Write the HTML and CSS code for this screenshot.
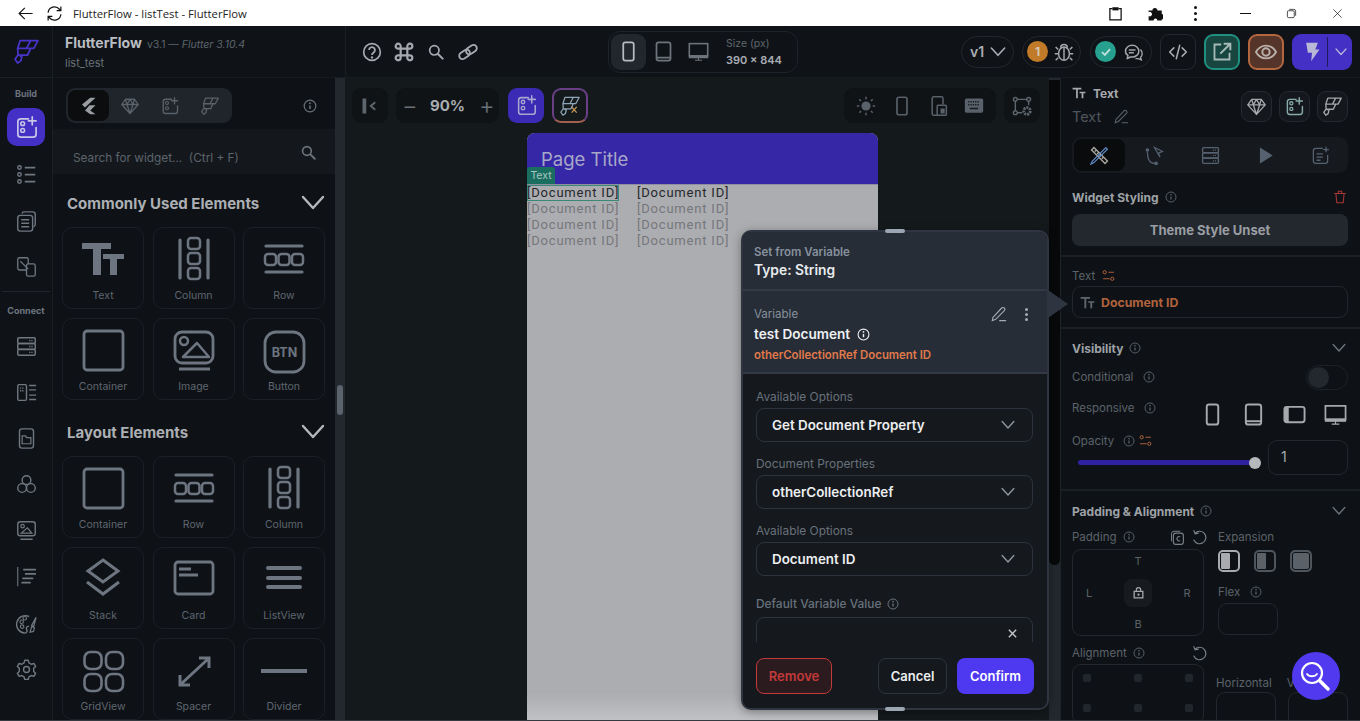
FILE: index.html
```html
<!DOCTYPE html>
<html lang="en">
<head>
<meta charset="utf-8">
<title>FlutterFlow - listTest - FlutterFlow</title>
<link rel="stylesheet" href="styles.css">
</head>
<body>
<svg class="sprite" aria-hidden="true">
  <symbol id="plus-w" viewBox="0 0 24 24"><path d="M14 3H6a3 3 0 0 0-3 3v13a3 3 0 0 0 3 3h13a3 3 0 0 0 3-3v-7M18 1v8M14 5h8" fill="none" stroke="currentColor" stroke-width="1.8" stroke-linecap="round"/><circle cx="8" cy="8" r="2" fill="none" stroke="currentColor" stroke-width="1.6"/><circle cx="8" cy="15" r="2" fill="none" stroke="currentColor" stroke-width="1.6"/></symbol>
  <symbol id="logo" viewBox="0 0 24 24"><path d="M6 1.500h17l-4 7.500H3.500zM16 1.500L12 9M3.500 9H16l-3 6.500H4zM4 15l3.500 2-1 4-3 2-2.500-3.500z" fill="none" stroke="currentColor" stroke-width="1.7" stroke-linejoin="round"/></symbol>
  <symbol id="gem" viewBox="0 0 24 24"><path d="M6 3h12l5 7-11 12L1 10zM1 10h22M8 10l4 12 4-12M6 3l2 7 4-7 4 7 2-7" fill="none" stroke="currentColor" stroke-width="1.7" stroke-linejoin="round"/></symbol>
  <symbol id="flutter" viewBox="0 0 24 24"><path d="M15 1h7L8 14l-4-4zM14 11h8l-7 7 7 5h-7l-7-5z" fill="currentColor"/></symbol>
  <symbol id="info" viewBox="0 0 24 24"><circle cx="12" cy="12" r="10" fill="none" stroke="currentColor" stroke-width="2"/><path d="M12 11v6" stroke="currentColor" stroke-width="2.6"/><circle cx="12" cy="7.3" r="1.6" fill="currentColor"/></symbol>
  <symbol id="search" viewBox="0 0 24 24"><circle cx="9.5" cy="9.5" r="7" fill="none" stroke="currentColor" stroke-width="2.6"/><path d="M15 15l7 7" stroke="currentColor" stroke-width="3" stroke-linecap="round"/></symbol>
  <symbol id="chev" viewBox="0 0 24 24"><path d="M2 6l10 11L22 6" fill="none" stroke="currentColor" stroke-width="2.4" stroke-linecap="round" stroke-linejoin="round"/></symbol>
  <symbol id="list" viewBox="0 0 24 24"><g fill="none" stroke="currentColor" stroke-width="1.6"><circle cx="4" cy="4" r="2"/><circle cx="4" cy="12" r="2"/><circle cx="4" cy="20" r="2"/></g><path d="M10 4h12M10 12h12M10 20h12" stroke="currentColor" stroke-width="2"/></symbol>
  <symbol id="cards" viewBox="0 0 24 24"><path d="M7 3a2 2 0 0 1 2-2h10a3 3 0 0 1 3 3v11a3 3 0 0 1-2 3" fill="none" stroke="currentColor" stroke-width="1.6"/><rect x="2" y="5" width="17" height="18" rx="3" fill="none" stroke="currentColor" stroke-width="1.6"/><path d="M6 10h9M6 14h9M6 18h9" stroke="currentColor" stroke-width="1.6"/></symbol>
  <symbol id="translate" viewBox="0 0 24 24"><rect x="2" y="2" width="12" height="14" rx="2" fill="none" stroke="currentColor" stroke-width="1.5"/><rect x="12" y="9" width="10" height="14" rx="2" fill="#0f1317" stroke="currentColor" stroke-width="1.5"/><path d="M5 6l9 9" stroke="currentColor" stroke-width="1.4"/></symbol>
  <symbol id="db" viewBox="0 0 24 24"><g fill="none" stroke="currentColor" stroke-width="1.7"><rect x="2" y="2" width="20" height="6.5" rx="1.4"/><rect x="2" y="8.7" width="20" height="6.5" rx="1.4"/><rect x="2" y="15.4" width="20" height="6.5" rx="1.4"/></g><path d="M15 5.2h4M15 12h4M15 18.7h4" stroke="currentColor" stroke-width="1.5" stroke-dasharray="1.5 1"/></symbol>
  <symbol id="api" viewBox="0 0 24 24"><rect x="2" y="3" width="10" height="18" rx="1.5" fill="none" stroke="currentColor" stroke-width="1.6"/><path d="M4.5 7h5M4.5 10h5" stroke="currentColor" stroke-width="1.6" stroke-dasharray="1.5 1"/><path d="M15 4h8M15 9h8M15 15h8M15 20h8" stroke="currentColor" stroke-width="1.6"/></symbol>
  <symbol id="folder" viewBox="0 0 24 24"><rect x="4" y="1" width="16" height="22" rx="3" fill="none" stroke="currentColor" stroke-width="1.6"/><path d="M7 9h4l1 2h5v7H7z" fill="none" stroke="currentColor" stroke-width="1.4"/></symbol>
  <symbol id="tri" viewBox="0 0 24 24"><g fill="none" stroke="currentColor" stroke-width="1.6"><circle cx="12" cy="7" r="5"/><circle cx="7" cy="16" r="5"/><circle cx="17" cy="16" r="5"/></g></symbol>
  <symbol id="image" viewBox="0 0 24 24"><rect x="2" y="2" width="20" height="16" rx="3" fill="none" stroke="currentColor" stroke-width="1.6"/><circle cx="7.5" cy="7" r="2" fill="none" stroke="currentColor" stroke-width="1.4"/><path d="M6 15l7-6 5 6zM5 22h14" fill="none" stroke="currentColor" stroke-width="1.5"/></symbol>
  <symbol id="align" viewBox="0 0 24 24"><path d="M2 1v22" stroke="currentColor" stroke-width="1.2"/><path d="M9 4h13M11 9h11M8 14h11M7 19h9" stroke="currentColor" stroke-width="2" stroke-linecap="round"/></symbol>
  <symbol id="palette" viewBox="0 0 24 24"><path d="M15 4a10 10 0 1 0-5 19c3 0 3-3 2-5s2-3 3-3" fill="none" stroke="currentColor" stroke-width="1.6"/><circle cx="6.5" cy="10" r="2" fill="none" stroke="currentColor" stroke-width="1.3"/><circle cx="10" cy="6" r="2" fill="none" stroke="currentColor" stroke-width="1.3"/><circle cx="7" cy="15.5" r="2" fill="none" stroke="currentColor" stroke-width="1.3"/><path d="M23 5l-5 9 2 2zM18 15l-2 7 4-1 1-4z" fill="none" stroke="currentColor" stroke-width="1.4"/></symbol>
  <symbol id="gear" viewBox="0 0 24 24"><path d="M10 1.5h4l.8 3 2.6 1.5 3-.9 2 3.4-2.2 2.2v3.500l2.2 2.2-2 3.400-3-.9-2.6 1.500-.8 3h-4l-.8-3L6.600 18.900l-3 .9-2-3.400 2.200-2.200v-3.500L1.600 8.500l2-3.400 3 .9L9.200 4.500z" fill="none" stroke="currentColor" stroke-width="1.6" stroke-linejoin="round"/><circle cx="12" cy="12" r="3.400" fill="none" stroke="currentColor" stroke-width="1.6"/></symbol>
  <symbol id="help" viewBox="0 0 24 24"><circle cx="12" cy="12" r="10" fill="none" stroke="currentColor" stroke-width="2"/><path d="M8.500 9.500a3.500 3.500 0 1 1 5.500 3c-1.300.9-2 1.500-2 3" fill="none" stroke="currentColor" stroke-width="2.200"/><circle cx="12" cy="18.500" r="1.400" fill="currentColor"/></symbol>
  <symbol id="cmd" viewBox="0 0 24 24"><path d="M8 8h8v8H8zM8 8H5a3 3 0 1 1 3-3zM16 8V5a3 3 0 1 1 3 3zM16 16h3a3 3 0 1 1-3 3zM8 16v3a3 3 0 1 1-3-3z" fill="none" stroke="currentColor" stroke-width="2.600"/></symbol>
  <symbol id="link" viewBox="0 0 24 24"><g fill="none" stroke="currentColor" stroke-width="2.200" transform="rotate(-35 12 12)"><rect x="0" y="8" width="14" height="8" rx="4"/><rect x="10" y="8" width="14" height="8" rx="4"/></g></symbol>
  <symbol id="phone" viewBox="0 0 24 24"><rect x="6" y="1.500" width="12" height="21" rx="2.500" fill="none" stroke="currentColor" stroke-width="2"/></symbol>
  <symbol id="tablet" viewBox="0 0 24 24"><rect x="4" y="1.500" width="16" height="21" rx="2.500" fill="none" stroke="currentColor" stroke-width="2"/><path d="M4 19h16" stroke="currentColor" stroke-width="2"/></symbol>
  <symbol id="desktop" viewBox="0 0 24 24"><rect x="1.500" y="3" width="21" height="14" fill="none" stroke="currentColor" stroke-width="1.800"/><path d="M1.500 17h21v2h-21zM8 22h8M12 19v3" fill="currentColor" stroke="currentColor" stroke-width="1.200"/></symbol>
  <symbol id="bug" viewBox="0 0 24 24"><ellipse cx="12" cy="14" rx="6.500" ry="8" fill="none" stroke="currentColor" stroke-width="1.800"/><path d="M8 7a4 4 0 0 1 8 0M12 6v16M5 9L2 6M19 9l3-3M5 14H1M19 14h4M5 19l-3 3M19 19l3 3" fill="none" stroke="currentColor" stroke-width="1.800"/></symbol>
  <symbol id="chat" viewBox="0 0 24 24"><path d="M3 11c0-4 3.500-7 8-7s8 3 8 7-3.500 7-8 7H9l-4 2 1-4c-2-1-3-3-3-5zM7 9.500h8M7 13h6" fill="none" stroke="currentColor" stroke-width="1.800" stroke-linejoin="round"/><path d="M21 9c1.500 1.500 2 3 2 5 0 2-1 3.500-2 4.500l1 3-4-1.500h-3" fill="none" stroke="currentColor" stroke-width="1.600"/></symbol>
  <symbol id="code" viewBox="0 0 24 24"><path d="M7 7l-5 5 5 5M17 7l5 5-5 5M14 4l-4 16" fill="none" stroke="currentColor" stroke-width="1.900" stroke-linecap="round" stroke-linejoin="round"/></symbol>
  <symbol id="open" viewBox="0 0 24 24"><path d="M11 3H3v18h18v-8" fill="none" stroke="currentColor" stroke-width="2.200"/><path d="M10 14L21 3M14 2h8v8" fill="none" stroke="currentColor" stroke-width="2.400"/></symbol>
  <symbol id="eye" viewBox="0 0 24 24"><path d="M1 12c3-5 7-7 11-7s8 2 11 7c-3 5-7 7-11 7s-8-2-11-7z" fill="none" stroke="currentColor" stroke-width="2"/><circle cx="12" cy="12" r="4" fill="none" stroke="currentColor" stroke-width="2.200"/></symbol>
  <symbol id="bolt" viewBox="0 0 24 24"><path d="M5 1h14l-3 8h5l-10 14 1-10H7z" fill="currentColor"/></symbol>
  <symbol id="sun" viewBox="0 0 24 24"><circle cx="12" cy="12" r="5.500" fill="currentColor"/><path d="M12 1v3M12 20v3M1 12h3M20 12h3M4 4l2 2M18 18l2 2M4 20l2-2M18 6l2-2" stroke="currentColor" stroke-width="1.800"/></symbol>
  <symbol id="keyboard" viewBox="0 0 24 24"><path d="M3 3h18a2 2 0 0 1 2 2v13a2 2 0 0 1-2 2H3a2 2 0 0 1-2-2V5a2 2 0 0 1 2-2z" fill="currentColor"/><path d="M5 7h14M5 10.500h14" stroke="#14181c" stroke-width="1.800" stroke-dasharray="1.500 1.300"/><path d="M7 15h10" stroke="#14181c" stroke-width="1.800"/></symbol>
  <symbol id="phone-k" viewBox="0 0 24 24"><path d="M12 23H7a2 2 0 0 1-2-2V3a2 2 0 0 1 2-2h9a2 2 0 0 1 2 2v7" fill="none" stroke="currentColor" stroke-width="1.800"/><rect x="11" y="11" width="11" height="12" rx="1" fill="none" stroke="currentColor" stroke-width="1.800"/><rect x="15" y="15" width="5" height="6" fill="currentColor"/></symbol>
  <symbol id="nodes" viewBox="0 0 24 24"><g fill="none" stroke="currentColor" stroke-width="1.700"><circle cx="4" cy="4" r="2.300"/><circle cx="20" cy="4" r="2.300"/><circle cx="4" cy="20" r="2.300"/><path d="M6 4h12M4 6v12M6 20h6M20 6v5"/></g><circle cx="18" cy="18" r="4" fill="none" stroke="currentColor" stroke-width="3.400" stroke-dasharray="2.500 1"/></symbol>
  <symbol id="collapse" viewBox="0 0 24 24"><rect x="2" y="2" width="5" height="20" fill="currentColor"/><path d="M19 7l-6 5 6 5" fill="none" stroke="currentColor" stroke-width="2.600"/></symbol>
  <symbol id="theme" viewBox="0 0 24 24"><path d="M6 1.500h17l-4 7.500H3.500zM16 1.500L12 9M3.500 9H16l-3 6.500H4zM4 15l3.500 2-1 4-3 2-2.500-3.500z" fill="none" stroke="currentColor" stroke-width="1.500" stroke-linejoin="round"/><path d="M14 13l6 7M20 13l-6 7" stroke="#d9a35a" stroke-width="1.300"/></symbol>
  <symbol id="ruler" viewBox="0 0 24 24"><path d="M5 2l17 17-3 3L2 5zM8 5L6 7M11 8l-2 2M14 11l-2 2M17 14l-2 2" fill="none" stroke="currentColor" stroke-width="1.800"/><path d="M20 2l2 2L5 21l-4 2 2-4z" fill="none" stroke="#5d8cc7" stroke-width="1.500"/></symbol>
  <symbol id="flow" viewBox="0 0 24 24"><circle cx="3" cy="5" r="2.300" fill="currentColor"/><circle cx="14" cy="22" r="2.300" fill="currentColor"/><path d="M3 7c0 9 3 15 9 15" fill="none" stroke="currentColor" stroke-width="1.500"/><path d="M12 2l10 5-5 2 2 5z" fill="none" stroke="currentColor" stroke-width="1.500"/></symbol>
  <symbol id="play" viewBox="0 0 24 24"><path d="M5 2l16 10L5 22z" fill="currentColor"/></symbol>
  <symbol id="notes" viewBox="0 0 24 24"><path d="M15 3H6a3 3 0 0 0-3 3v13a3 3 0 0 0 3 3h12a3 3 0 0 0 3-3v-8M19 1v7M15.500 4.500h7M7 10h8M7 14h8M7 18h5" fill="none" stroke="currentColor" stroke-width="1.600"/></symbol>
  <symbol id="trash" viewBox="0 0 24 24"><path d="M2 6h20M9 6V2h6v4M5 6l1.500 16h11L19 6" fill="none" stroke="currentColor" stroke-width="1.800"/></symbol>
  <symbol id="pencil" viewBox="0 0 24 24"><path d="M3 17L16 3a2.500 2.500 0 0 1 4 4L7 20l-5 2zM13 22h9" fill="none" stroke="currentColor" stroke-width="1.700" stroke-linecap="round"/></symbol>
  <symbol id="tt" viewBox="0 0 24 24"><path d="M1 3h15v3h-6v15H7V6H1zM13 10h10v2.500h-3.500V21h-3v-8.500H13z" fill="currentColor"/></symbol>
  <symbol id="vars" viewBox="0 0 24 24"><g fill="none" stroke="currentColor" stroke-width="1.800"><circle cx="5" cy="6" r="3"/><circle cx="19" cy="18" r="3"/><path d="M12 6h10M2 18h12"/></g></symbol>
  <symbol id="copy" viewBox="0 0 24 24"><path d="M4 18V6a4 4 0 0 1 4-4h10" fill="none" stroke="currentColor" stroke-width="1.600"/><rect x="7" y="5" width="16" height="18" rx="4" fill="none" stroke="currentColor" stroke-width="1.800"/><path d="M18 11a3.500 3.500 0 1 0 0 6" fill="none" stroke="currentColor" stroke-width="1.800"/></symbol>
  <symbol id="undo" viewBox="0 0 24 24"><path d="M5 5a10 10 0 1 1-2 11M3 1l2 5 5-1" fill="none" stroke="currentColor" stroke-width="1.900" stroke-linecap="round"/></symbol>
  <symbol id="lock" viewBox="0 0 24 24"><path d="M8 10V7a4 4 0 0 1 8 0v3" fill="none" stroke="currentColor" stroke-width="2.200"/><path d="M4 10h16v12H4z" fill="none" stroke="currentColor" stroke-width="2.400"/><circle cx="12" cy="16" r="2" fill="currentColor"/></symbol>
  <symbol id="clipboard" viewBox="0 0 24 24"><path d="M7 4H3v18h18V4h-4" fill="none" stroke="currentColor" stroke-width="2"/><path d="M7 2h10v5H7z" fill="currentColor"/></symbol>
  <symbol id="puzzle" viewBox="0 0 24 24"><path d="M1 7h6a4 4 0 1 1 8 0h7v6a4 4 0 1 1 0 8v2h-7a3 3 0 1 0-6 0H1v-7a3.500 3.500 0 1 0 0-6z" fill="currentColor"/></symbol>
  <symbol id="restore" viewBox="0 0 24 24"><rect x="3" y="6" width="15" height="15" rx="2.500" fill="none" stroke="currentColor" stroke-width="1.600"/><path d="M7 3h10a4 4 0 0 1 4 4v10" fill="none" stroke="currentColor" stroke-width="1.600"/></symbol>
  <symbol id="t-text" viewBox="0 0 48 48"><path d="M3 8h29v6H22v26h-8V14H3zM24 19h21v5h-7v16h-7V24h-7z" fill="currentColor"/></symbol>
  <symbol id="t-column" viewBox="0 0 48 48"><g fill="none" stroke="currentColor" stroke-width="2.500"><rect x="18" y="3" width="12" height="11" rx="3"/><rect x="18" y="18" width="12" height="11" rx="3"/><rect x="18" y="33" width="12" height="11" rx="3"/></g><path d="M10 5v38M38 5v38" stroke="currentColor" stroke-width="3.200" stroke-linecap="round"/></symbol>
  <symbol id="t-row" viewBox="0 0 48 48"><g fill="none" stroke="currentColor" stroke-width="2.500"><rect x="5" y="19" width="11" height="11" rx="3"/><rect x="18.500" y="19" width="11" height="11" rx="3"/><rect x="32" y="19" width="11" height="11" rx="3"/></g><path d="M6 11h36M6 37h36" stroke="currentColor" stroke-width="3.200" stroke-linecap="round"/></symbol>
  <symbol id="t-container" viewBox="0 0 48 48"><rect x="5" y="5" width="39" height="39" rx="3" fill="none" stroke="currentColor" stroke-width="2.800"/></symbol>
  <symbol id="t-image" viewBox="0 0 48 48"><rect x="5" y="6" width="38" height="31" rx="7" fill="none" stroke="currentColor" stroke-width="2.800"/><circle cx="14" cy="15" r="4" fill="none" stroke="currentColor" stroke-width="2.500"/><path d="M13 31l14-14 12 14z" fill="none" stroke="currentColor" stroke-width="2.500" stroke-linejoin="round"/><path d="M9 43h31" stroke="currentColor" stroke-width="3"/></symbol>
  <symbol id="t-stack" viewBox="0 0 48 48"><path d="M24 5l15 11-15 11L9 16z" fill="none" stroke="currentColor" stroke-width="3"/><path d="M8 27l16 12 16-12" fill="none" stroke="currentColor" stroke-width="3"/></symbol>
  <symbol id="t-card" viewBox="0 0 48 48"><rect x="5" y="7" width="38" height="32" rx="3" fill="none" stroke="currentColor" stroke-width="2.800"/><path d="M9 14h12M9 20h19" stroke="currentColor" stroke-width="3"/></symbol>
  <symbol id="t-list" viewBox="0 0 48 48"><path d="M8 13h32M8 23h32M8 32h32" stroke="currentColor" stroke-width="4" stroke-linecap="round"/></symbol>
  <symbol id="t-grid" viewBox="0 0 48 48"><g fill="none" stroke="currentColor" stroke-width="2.600"><rect x="5.500" y="6" width="17" height="17" rx="6"/><rect x="27" y="6" width="17" height="17" rx="6"/><rect x="5.500" y="28" width="17" height="17" rx="6"/><rect x="27" y="28" width="17" height="17" rx="6"/></g></symbol>
  <symbol id="t-spacer" viewBox="0 0 48 48"><path d="M10 39l28-26M10 29v10h10M29 12h10v10" fill="none" stroke="currentColor" stroke-width="3"/></symbol>
  <symbol id="t-divider" viewBox="0 0 48 48"><path d="M1 25h46" stroke="currentColor" stroke-width="4"/></symbol>
</svg>

<header class="chrome">
  <svg class="c-ic c-back" viewBox="0 0 24 24"><path d="M22 12H3M11 4l-8 8 8 8" fill="none" stroke="currentColor" stroke-width="1.600"/></svg>
  <svg class="c-ic c-reload" viewBox="0 0 24 24"><path d="M3 11a9 9 0 0 1 16-5l2 2M21 13a9 9 0 0 1-16 5l-2-2M21 2v6h-6M3 22v-6h6" fill="none" stroke="currentColor" stroke-width="1.700"/></svg>
  <span class="c-title">FlutterFlow - listTest - FlutterFlow</span>
  <span class="c-fill"></span>
  <svg class="c-act"><use href="#clipboard"/></svg>
  <svg class="c-act"><use href="#puzzle"/></svg>
  <span class="c-dots"><i></i><i></i><i></i></span>
  <span class="c-win"><i class="c-min"></i></span>
  <svg class="c-win-ic"><use href="#restore"/></svg>
  <svg class="c-win-ic" viewBox="0 0 24 24"><path d="M3 3l18 18M21 3L3 21" stroke="currentColor" stroke-width="1.500"/></svg>
</header>

<div class="app">
  <nav class="rail">
    <div class="rail-logo"><svg><use href="#logo"/></svg></div>
    <span class="rail-label rail-build">Build</span>
    <button class="rail-active"><svg><use href="#plus-w"/></svg></button>
    <svg class="ri ri-list"><use href="#list"/></svg>
    <svg class="ri ri-cards"><use href="#cards"/></svg>
    <svg class="ri ri-tr"><use href="#translate"/></svg>
    <hr class="rail-sep">
    <span class="rail-label rail-connect">Connect</span>
    <svg class="ri ri-db"><use href="#db"/></svg>
    <svg class="ri ri-n"><use href="#api"/></svg>
    <svg class="ri ri-n"><use href="#folder"/></svg>
    <svg class="ri ri-n"><use href="#tri"/></svg>
    <svg class="ri ri-n"><use href="#image"/></svg>
    <svg class="ri ri-n"><use href="#align"/></svg>
    <svg class="ri ri-n"><use href="#palette"/></svg>
    <svg class="ri ri-n"><use href="#gear"/></svg>
  </nav>

  <div class="main">
    <div class="topbar">
      <div class="brand">
        <div class="brand-name"><b>FlutterFlow</b> <span>v3.1 — <em>Flutter 3.10.4</em></span></div>
        <div class="brand-proj">list_test</div>
      </div>
      <div class="tools">
        <svg class="tool"><use href="#help"/></svg>
        <svg class="tool"><use href="#cmd"/></svg>
        <svg class="tool tool-s"><use href="#search"/></svg>
        <svg class="tool"><use href="#link"/></svg>
      </div>
      <div class="devices">
        <span class="dev dev-on"><svg><use href="#phone"/></svg></span>
        <span class="dev"><svg><use href="#tablet"/></svg></span>
        <span class="dev"><svg><use href="#desktop"/></svg></span>
        <div class="size"><span>Size (px)</span><b>390 x 844</b></div>
      </div>
      <div class="pill pill-v"><b>v1</b><svg><use href="#chev"/></svg></div>
      <div class="pill pill-n"><span class="dot dot-o">1</span><svg><use href="#bug"/></svg></div>
      <div class="pill pill-c"><span class="dot dot-t"><svg viewBox="0 0 24 24"><path d="M5 12l5 5 9-10" fill="none" stroke="currentColor" stroke-width="3"/></svg></span><svg><use href="#chat"/></svg></div>
      <span class="sq sq-code"><svg><use href="#code"/></svg></span>
      <span class="sq sq-teal"><svg><use href="#open"/></svg></span>
      <span class="sq sq-brown"><svg><use href="#eye"/></svg></span>
      <span class="run"><svg class="run-b"><use href="#bolt"/></svg><i></i><svg class="run-c"><use href="#chev"/></svg></span>
    </div>

    <div class="work">
      <aside class="left">
        <div class="left-in">
          <div class="lib-row">
            <div class="lib-tabs">
              <span class="lib-on"><svg><use href="#flutter"/></svg></span>
              <span><svg><use href="#gem"/></svg></span>
              <span><svg><use href="#plus-w"/></svg></span>
              <span><svg><use href="#logo"/></svg></span>
            </div>
            <svg class="lib-info"><use href="#info"/></svg>
          </div>
          <div class="lib-search"><span>Search for widget...&nbsp; (Ctrl + F)</span><svg><use href="#search"/></svg></div>
          <div class="sec-h sec-first"><span>Commonly Used Elements</span><svg><use href="#chev"/></svg></div>
          <div class="tiles">
            <div class="tile"><svg><use href="#t-text"/></svg><span>Text</span></div>
            <div class="tile"><svg><use href="#t-column"/></svg><span>Column</span></div>
            <div class="tile"><svg><use href="#t-row"/></svg><span>Row</span></div>
            <div class="tile"><svg><use href="#t-container"/></svg><span>Container</span></div>
            <div class="tile"><svg><use href="#t-image"/></svg><span>Image</span></div>
            <div class="tile"><svg viewBox="0 0 48 48"><rect x="5" y="6" width="39" height="40" rx="11" fill="none" stroke="currentColor" stroke-width="2.800"/><text x="24.500" y="31" text-anchor="middle" class="btn-t">BTN</text></svg><span>Button</span></div>
          </div>
          <div class="sec-h"><span>Layout Elements</span><svg><use href="#chev"/></svg></div>
          <div class="tiles">
            <div class="tile"><svg><use href="#t-container"/></svg><span>Container</span></div>
            <div class="tile"><svg><use href="#t-row"/></svg><span>Row</span></div>
            <div class="tile"><svg><use href="#t-column"/></svg><span>Column</span></div>
            <div class="tile"><svg><use href="#t-stack"/></svg><span>Stack</span></div>
            <div class="tile"><svg><use href="#t-card"/></svg><span>Card</span></div>
            <div class="tile"><svg><use href="#t-list"/></svg><span>ListView</span></div>
            <div class="tile"><svg><use href="#t-grid"/></svg><span>GridView</span></div>
            <div class="tile"><svg><use href="#t-spacer"/></svg><span>Spacer</span></div>
            <div class="tile"><svg><use href="#t-divider"/></svg><span>Divider</span></div>
          </div>
        </div>
        <div class="left-track"><i></i></div>
      </aside>

      <section class="canvas">
        <div class="cv-bar">
          <span class="cv-btn"><svg><use href="#collapse"/></svg></span>
          <div class="zoom"><span>−</span><b>90%</b><span>+</span></div>
          <span class="cv-purple"><svg><use href="#plus-w"/></svg></span>
          <span class="cv-grad"><svg><use href="#theme"/></svg></span>
          <span class="cv-fill"></span>
          <div class="cv-group">
            <svg><use href="#sun"/></svg><svg><use href="#phone"/></svg><svg><use href="#phone-k"/></svg><svg><use href="#keyboard"/></svg>
          </div>
          <span class="cv-btn cv-nodes"><svg><use href="#nodes"/></svg></span>
        </div>
        <div class="phone">
          <div class="ph-head">
            <span class="ph-title">Page Title</span>
            <span class="ph-tag">Text</span>
          </div>
          <div class="ph-grid">
            <span class="doc doc-sel">[Document ID]</span><span class="doc doc-dark">[Document ID]</span>
            <span class="doc">[Document ID]</span><span class="doc">[Document ID]</span>
            <span class="doc">[Document ID]</span><span class="doc">[Document ID]</span>
            <span class="doc">[Document ID]</span><span class="doc">[Document ID]</span>
          </div>
        </div>
      </section>

      <div class="right-track"><i></i></div>

      <aside class="right">
        <div class="r-sec r-top">
          <div class="r-head">
            <div>
              <div class="r-title"><svg><use href="#tt"/></svg><b>Text</b></div>
              <div class="r-name"><span>Text</span><svg><use href="#pencil"/></svg></div>
            </div>
            <div class="r-btns">
              <span><svg><use href="#gem"/></svg></span>
              <span class="r-btn-c"><svg><use href="#plus-w"/></svg></span>
              <span><svg><use href="#logo"/></svg></span>
            </div>
          </div>
          <div class="r-tabs">
            <span class="r-tab-on"><svg><use href="#ruler"/></svg></span>
            <span><svg><use href="#flow"/></svg></span>
            <span><svg><use href="#db"/></svg></span>
            <span><svg><use href="#play"/></svg></span>
            <span><svg><use href="#notes"/></svg></span>
          </div>
          <div class="r-h r-style"><b>Widget Styling</b><svg class="i-i"><use href="#info"/></svg><svg class="i-trash"><use href="#trash"/></svg></div>
          <div class="theme-btn">Theme Style Unset</div>
        </div>

        <div class="r-sec r-text">
          <div class="r-lbl">Text <svg class="i-vars"><use href="#vars"/></svg></div>
          <div class="r-field"><svg><use href="#tt"/></svg><b>Document ID</b></div>
        </div>

        <div class="r-sec r-vis">
          <div class="r-h"><b>Visibility</b><svg class="i-i"><use href="#info"/></svg><svg class="i-ch"><use href="#chev"/></svg></div>
          <div class="r-row r-cond"><span class="r-lbl">Conditional <svg class="i-i"><use href="#info"/></svg></span><span class="toggle"><i></i></span></div>
          <div class="r-row r-resp"><span class="r-lbl">Responsive <svg class="i-i"><use href="#info"/></svg></span>
            <span class="resp"><svg><use href="#phone"/></svg><svg><use href="#tablet"/></svg><svg class="resp-l" viewBox="0 0 24 24"><rect x="1.500" y="4" width="21" height="16" rx="2.500" fill="none" stroke="currentColor" stroke-width="2"/><path d="M4 4v16" stroke="currentColor" stroke-width="4"/></svg><svg><use href="#desktop"/></svg></span></div>
          <div class="r-opacity">
            <div class="op-left">
              <span class="r-lbl">Opacity <svg class="i-i"><use href="#info"/></svg><svg class="i-vars"><use href="#vars"/></svg></span>
              <span class="slider"><i></i></span>
            </div>
            <div class="op-input">1</div>
          </div>
        </div>

        <div class="r-sec r-pad">
          <div class="r-h"><b>Padding &amp; Alignment</b><svg class="i-i"><use href="#info"/></svg><svg class="i-ch"><use href="#chev"/></svg></div>
          <div class="pad-grid">
            <div class="pad-l">
              <div class="r-lbl pad-lbl">Padding <svg class="i-i"><use href="#info"/></svg><span class="pad-sp"></span><svg class="i-act"><use href="#copy"/></svg><svg class="i-act"><use href="#undo"/></svg></div>
              <div class="pad-box">
                <span></span><span>T</span><span></span>
                <span>L</span><span class="lockb"><svg><use href="#lock"/></svg></span><span>R</span>
                <span></span><span>B</span><span></span>
              </div>
              <div class="r-lbl pad-lbl al-lbl">Alignment <svg class="i-i"><use href="#info"/></svg><span class="pad-sp"></span><svg class="i-act"><use href="#undo"/></svg></div>
              <div class="al-box"><i></i><i></i><i></i><i></i><i></i><i></i></div>
            </div>
            <div class="pad-r">
              <div class="r-lbl">Expansion</div>
              <div class="exp"><span class="exp-a"><i></i></span><span class="exp-b"><i></i></span><span class="exp-c"></span></div>
              <div class="r-lbl flex-lbl">Flex <svg class="i-i"><use href="#info"/></svg></div>
              <div class="flex-in"></div>
              <div class="r-lbl hz-lbl">Horizontal<span class="hz-v">Vertical</span></div>
              <div class="hz-ins"><span></span><span></span></div>
            </div>
          </div>
        </div>
      </aside>
    </div>
  </div>
</div>

<div class="popup">
  <i class="grip grip-t"></i>
  <div class="pop-head">
    <span>Set from Variable</span>
    <b>Type: String</b>
  </div>
  <div class="pop-var">
    <div class="pop-var-top"><span>Variable</span><svg class="pv-pen"><use href="#pencil"/></svg><span class="pv-dots"><i></i><i></i><i></i></span></div>
    <div class="pop-var-name"><b>test Document</b><svg><use href="#info"/></svg></div>
    <div class="pop-var-sub">otherCollectionRef Document ID</div>
  </div>
  <div class="pop-body">
    <div class="pf"><label>Available Options</label><div class="sel"><b>Get Document Property</b><svg><use href="#chev"/></svg></div></div>
    <div class="pf"><label>Document Properties</label><div class="sel"><b>otherCollectionRef</b><svg><use href="#chev"/></svg></div></div>
    <div class="pf"><label>Available Options</label><div class="sel"><b>Document ID</b><svg><use href="#chev"/></svg></div></div>
    <div class="pf pf-def"><label>Default Variable Value <svg><use href="#info"/></svg></label><div class="def-in"><svg viewBox="0 0 24 24"><path d="M4 4l16 16M20 4L4 20" stroke="currentColor" stroke-width="3"/></svg></div></div>
  </div>
  <div class="pop-foot">
    <span class="pb pb-rem">Remove</span>
    <span class="pb-fill"></span>
    <span class="pb pb-can">Cancel</span>
    <span class="pb pb-con">Confirm</span>
  </div>
  <i class="grip grip-b"></i>
  <i class="pop-arrow"></i>
</div>

<div class="fab"><svg viewBox="0 0 48 48"><circle cx="20" cy="21" r="10" fill="none" stroke="#fff" stroke-width="2.200"/><path d="M28 29l8 8" stroke="#fff" stroke-width="3.500" stroke-linecap="round"/><path d="M15 22c2 3 8 3 10 0" fill="none" stroke="#fff" stroke-width="1.800" stroke-linecap="round"/></svg></div>
</body>
</html>
```

FILE: styles.css
```css
* { box-sizing: border-box; }
html, body { margin: 0; height: 100%; overflow: hidden; }
body { font-family: Inter, "Noto Sans", sans-serif; background: #0f1317; color: #b8bcc1; position: relative; }
svg { display: block; }
b { font-weight: 700; }
i { display: block; font-style: normal; }
.sprite { width: 0; height: 0; position: absolute; }

/* browser chrome */
.chrome { height: 26px; background: #fff; color: #111; display: flex; align-items: center; }
.c-ic { width: 17px; height: 17px; }
.c-back { margin-left: 17px; }
.c-reload { margin-left: 12px; }
.c-title { margin-left: 10px; font: 11.3px "Open Sans", sans-serif; color: #222; }
.c-fill { flex: 1; }
.c-act { width: 15px; height: 15px; margin-right: 25px; }
.c-dots { display: flex; flex-direction: column; gap: 3px; margin: 0 43.5px 0 5.5px; }
.c-dots i { width: 3px; height: 3px; border-radius: 50%; background: #111; }
.c-win { width: 11px; margin-right: 35px; }
.c-min { height: 1px; background: #111; }
.c-win-ic { width: 11px; height: 11px; margin-right: 35px; }
.c-win-ic:last-child { margin-right: 17px; }

.app { height: 695px; display: flex; border-bottom: 1px solid #343a40; }

/* rail */
.rail { width: 53px; flex: none; background: #0f1317; border-right: 1px solid #1a1f24; display: flex; flex-direction: column; align-items: center; }
.rail-logo { height: 52px; width: 100%; border-bottom: 1px solid #1c2126; display: flex; align-items: center; justify-content: center; }
.rail-logo svg { width: 25px; height: 25px; color: #4a33c9; }
.rail-label { font-size: 9px; font-weight: 700; color: #6c7480; }
.rail-build { margin-top: 10px; line-height: 12px; }
.rail-connect { margin-top: 13px; line-height: 12px; color: #6f7781; }
.rail-active { margin-top: 8px; width: 38px; height: 38px; border: 0; padding: 0; border-radius: 10px; background: #4530c6; color: #c8c5e6; display: flex; align-items: center; justify-content: center; }
.rail-active svg { width: 23px; height: 23px; }
.ri { width: 21px; height: 21px; color: #6f7781; flex: none; }
.ri-list { margin-top: 18px; }
.ri-cards { margin-top: 26px; }
.ri-tr { margin-top: 24px; }
.rail-sep { width: 48px; border: 0; border-top: 1px solid #20252b; margin: 14px 0 0; }
.ri-db { margin-top: 19px; }
.ri-n { margin-top: 25.100px; }

.main { flex: 1; min-width: 0; display: flex; flex-direction: column; }

/* top bar */
.topbar { height: 52px; flex: none; display: flex; align-items: center; background: #0f1317; border-bottom: 1px solid #171b20; }
.brand { width: 293px; height: 100%; padding: 8px 12px; border-right: 1px solid #1a1f24; flex: none; }
.brand-name { font-size: 10.500px; color: #5d646c; line-height: 18px; white-space: nowrap; }
.brand-name b { font-size: 14px; color: #b9bdc2; margin-right: 2px; }
.brand-proj { font-size: 11px; color: #6a7178; line-height: 19px; }
.tools { display: flex; align-items: center; gap: 12px; padding-left: 16px; width: 262px; flex: none; }
.tool { width: 20px; height: 20px; color: #a6aab0; }
.tool-s { width: 16px; height: 16px; margin: 0 2px; }
.devices { width: 190px; height: 42px; border: 1px solid #1e2329; border-radius: 12px; display: flex; align-items: center; padding-left: 2px; flex: none; }
.dev { width: 35px; height: 36px; border-radius: 9px; display: flex; align-items: center; justify-content: center; color: #6d747c; }
.dev svg { width: 21px; height: 21px; }
.dev-on { background: #22272e; color: #b7bbc0; }
.size { margin-left: 10px; display: flex; flex-direction: column; gap: 3px; font-size: 10.500px; color: #5f666e; }
.size b { font-size: 11px; font-weight: 600; color: #a9adb3; }
.pill { height: 32px; border: 1px solid #22272d; border-radius: 16px; display: flex; align-items: center; flex: none; }
.pill-v { width: 53px; margin-left: 163px; padding-left: 8px; gap: 6px; color: #a9adb3; }
.pill-v b { font-size: 14px; font-weight: 600; }
.pill-v svg { width: 16px; height: 16px; }
.pill-n { width: 59px; margin-left: 8px; padding-left: 4px; gap: 6px; color: #a3a7ac; }
.pill-n > svg { width: 20px; height: 20px; }
.pill-c { width: 62px; margin-left: 9px; padding-left: 4px; gap: 7px; color: #a3a7ac; }
.pill-c > svg { width: 20px; height: 20px; }
.dot { width: 21px; height: 21px; border-radius: 50%; display: flex; align-items: center; justify-content: center; font-size: 12px; font-weight: 700; flex: none; }
.dot-o { background: #c17a27; color: #d7c8b4; }
.dot-t { background: #27a18f; color: #c3dfdb; }
.dot-t svg { width: 14px; height: 14px; }
.sq { width: 36px; height: 36px; border-radius: 9px; display: flex; align-items: center; justify-content: center; flex: none; margin-left: 8px; }
.sq svg { width: 20px; height: 20px; }
.sq-code { border: 1px solid #24292f; color: #a8acb1; }
.sq-teal { background: #17453f; border: 2px solid #1f9080; color: #a7b9b6; }
.sq-brown { background: #553429; border: 2px solid #b4663f; color: #b9b0ab; }
.sq-brown svg { width: 22px; height: 22px; }
.run { width: 60px; height: 36px; border-radius: 9px; background: #4530c6; margin-left: 8px; display: flex; align-items: center; color: #b9b6d6; flex: none; }
.run-b { width: 20px; height: 20px; margin-left: 10px; }
.run i { width: 1px; height: 30px; background: #1f1a58; margin-left: 5px; }
.run-c { width: 12px; height: 12px; margin-left: 7px; }

.work { flex: 1; min-height: 0; display: flex; }

/* left panel */
.left { width: 292px; flex: none; display: flex; background: #0e1216; overflow: hidden; }
.left-in { width: 282px; flex: none; }
.lib-row { height: 52px; padding: 10px 18px 0 13px; display: flex; border-bottom: 1px solid #14181c; }
.lib-tabs { width: 166px; height: 35px; border-radius: 9px; background: #1f252b; display: flex; padding: 2px; }
.lib-tabs span { width: 41px; display: flex; align-items: center; justify-content: center; color: #59616a; }
.lib-tabs .lib-on { width: 42px; margin-right: 1px; background: #0b0d0f; border-radius: 8px; color: #9a9ea3; }
.lib-tabs svg { width: 18px; height: 18px; }
.lib-info { width: 14px; height: 14px; color: #6a7178; margin: 11px 0 0 auto; }
.lib-search { height: 45px; background: #14181c; display: flex; align-items: center; padding: 12px 20px 0; font-size: 11.800px; color: #5d646c; justify-content: space-between; margin-top: -1px; }
.lib-search svg { width: 15px; height: 15px; color: #6c737b; margin-top: -10px; margin-right: -1px; }
.sec-h { height: 24px; margin: 20px 10px 0 14px; display: flex; align-items: center; justify-content: space-between; font-size: 15px; font-weight: 700; color: #acafb3; }
.sec-h svg { width: 24px; height: 24px; color: #b5b8bb; }
.sec-first { margin-top: 17px; }
.tiles { margin: 12px 0 0 9px; display: grid; grid-template-columns: repeat(3, 82px); grid-auto-rows: 82px; gap: 9px 8.500px; }
.tile { border: 1px solid #1b2026; border-radius: 10px; display: flex; flex-direction: column; align-items: center; padding-top: 7px; color: #6d7580; font-size: 10.500px; }
.tile svg { width: 48px; height: 48px; flex: none; }
.tile span { margin-top: 6px; color: #5f6670; line-height: 14px; }
.btn-t { font: 700 12.500px Inter, sans-serif; fill: currentColor; }
.left-track { width: 10px; flex: none; background: #22282e; padding-top: 307px; }
.left-track i { width: 6px; height: 30px; margin: 0 2px; border-radius: 3px; background: #5a626b; }

/* canvas */
.canvas { width: 703px; flex: none; padding: 10px 8px 0 7px; background: #14191c; overflow: hidden; }
.cv-bar { height: 35px; display: flex; align-items: center; }
.cv-btn { width: 36px; height: 35px; border-radius: 9px; background: #0f1316; display: flex; align-items: center; justify-content: center; color: #5d656d; flex: none; }
.cv-btn svg { width: 18px; height: 18px; }
.zoom { width: 103px; height: 35px; margin-left: 8px; border-radius: 9px; background: #0f1316; display: flex; align-items: center; justify-content: space-between; padding: 0 6px; flex: none; }
.zoom span { font-size: 24px; font-weight: 300; line-height: 24px; color: #6a7178; width: 14px; text-align: center; }
.zoom b { font-size: 15px; color: #a9adb1; }
.cv-purple { width: 36px; height: 35px; margin-left: 9px; border-radius: 9px; background: #3b2ab4; color: #a8a5cf; display: flex; align-items: center; justify-content: center; flex: none; }
.cv-purple svg { width: 21px; height: 21px; }
.cv-grad { width: 36px; height: 35px; margin-left: 8px; border-radius: 9px; border: 2px solid #6a3f86; border-bottom-color: #a0604f; color: #8fa6b8; display: flex; align-items: center; justify-content: center; flex: none; }
.cv-grad svg { width: 20px; height: 20px; }
.cv-fill { flex: 1; }
.cv-group { width: 152px; height: 35px; border-radius: 9px; background: #0f1316; display: flex; align-items: center; justify-content: space-around; padding: 0 4px; color: #59616a; flex: none; }
.cv-group svg { width: 20px; height: 20px; }
.cv-nodes { margin-left: 8px; width: 36px; }
.cv-nodes svg { width: 20px; height: 20px; }

.phone { width: 351px; height: 600px; margin: 10px 0 0 175px; border-radius: 8px 8px 0 0; overflow: hidden; background: linear-gradient(#acadb1 0, #acadb1 560px, #c2c3c5 590px); }
.ph-head { height: 52px; background: #3527a5; border-bottom: 1px solid #8f8fa0; position: relative; padding: 14px 14px 0; }
.ph-title { font-size: 18.500px; color: #a9a7c9; line-height: 24px; }
.ph-tag { position: absolute; left: 0; bottom: 0; width: 28px; height: 17px; background: #1a6e60; color: #a9c6c0; font-size: 10.500px; text-align: center; line-height: 17px; border-radius: 3px 3px 0 0; }
.ph-grid { display: grid; grid-template-columns: 110px 110px; grid-auto-rows: 16px; }
.doc { font: 13px Roboto, sans-serif; letter-spacing: .8px; color: #75777c; line-height: 16px; white-space: nowrap; }
.doc-dark { color: #26282c; }
.doc-sel { color: #26282c; width: 92px; outline: 1px solid #3a8877; outline-offset: -1px; }

/* right */
.right-track { width: 12px; flex: none; background: #22282e; border-left: 1px solid #14191c; }
.right-track i { width: 11px; height: 485px; margin-top: 2px; background: #07090a; border-radius: 0 0 6px 6px; }
.right { flex: 1; min-width: 0; background: #0e1216; border-left: 1px solid #1e2329; overflow: hidden; }
.r-sec { padding: 0 12px 0 11px; border-bottom: 2px solid #1a1f24; }
.r-top { height: 179px; }
.r-head { display: flex; justify-content: space-between; padding-top: 7px; height: 59px; }
.r-title { display: flex; align-items: center; gap: 7px; font-size: 12px; color: #a6a9ae; height: 16px; }
.r-title svg { width: 14px; height: 14px; color: #a6a9ae; }
.r-name { display: flex; align-items: center; gap: 13px; font-size: 14.500px; color: #4f555c; margin-top: 4px; height: 22px; }
.r-name svg { width: 15px; height: 15px; color: #5a6168; }
.r-btns { display: flex; gap: 7px; padding-top: 6px; }
.r-btns span { width: 31px; height: 31px; border: 1px solid #252a30; border-radius: 9px; background: #14181c; display: flex; align-items: center; justify-content: center; color: #a4a8ad; }
.r-btns svg { width: 19px; height: 19px; }
.r-btns .r-btn-c { color: #8aa; }
.r-tabs { height: 36px; border-radius: 9px; background: #161a1f; display: flex; align-items: center; padding: 0 2px; justify-content: space-between; }
.r-tabs span { width: 51px; height: 32px; display: flex; align-items: center; justify-content: center; color: #566170; border-radius: 8px; }
.r-tabs svg { width: 19px; height: 19px; }
.r-tabs .r-tab-on { background: #090b0d; color: #a9a6a0; }
.r-h { display: flex; align-items: center; font-size: 12px; color: #9ea2a7; height: 16px; }
.r-style { margin-top: 16px; }
.i-i { width: 12px; height: 12px; color: #565d64; margin-left: 6px; display: inline-block; vertical-align: -2px; }
.i-trash { width: 14px; height: 14px; color: #a93636; margin-left: auto; margin-right: 1px; }
.i-ch { width: 14px; height: 14px; color: #6a7178; margin-left: auto; margin-right: 2px; }
.theme-btn { height: 32px; margin-top: 9px; border-radius: 8px; background: #23282f; color: #9a9ea3; font-size: 13px; font-weight: 700; text-align: center; line-height: 32px; }
.r-text { height: 72px; padding-top: 11px; }
.r-lbl { font-size: 11.500px; color: #5c6269; line-height: 16px; white-space: nowrap; }
.i-vars { width: 13px; height: 13px; color: #b0623d; display: inline-block; vertical-align: -2px; margin-left: 4px; }
.r-field { height: 32px; margin-top: 2px; border: 1px solid #22272d; border-radius: 9px; display: flex; align-items: center; padding-left: 7px; gap: 6px; font-size: 12.300px; color: #b0623d; }
.r-field svg { width: 15px; height: 15px; color: #5e656c; }
.r-vis { height: 162px; padding-top: 11px; }
.r-row { display: flex; justify-content: space-between; }
.r-cond { margin-top: 13px; height: 24px; }
.toggle { width: 42px; height: 25px; border: 1px solid #1c2126; border-radius: 13px; margin-top: -4px; padding: 1px; }
.toggle i { width: 21px; height: 21px; border-radius: 50%; background: #23282f; }
.r-resp { margin-top: 7px; height: 24px; }
.resp { display: flex; width: 146px; justify-content: space-between; margin-top: 3px; margin-right: 1px; color: #a6a9ae; }
.resp svg { width: 23px; height: 23px; }
.r-opacity { display: flex; margin-top: 5px; justify-content: space-between; }
.op-left { width: 190px; }
.slider { display: block; margin: 11px 0 0 6px; width: 177px; height: 5px; border-radius: 3px; background: #2f22a0; position: relative; }
.slider i { position: absolute; right: -6px; top: -3px; width: 12px; height: 12px; border-radius: 50%; background: #b6b8bb; }
.op-input { width: 80px; height: 35px; margin-top: 11px; border: 1px solid #22272d; border-radius: 9px; padding-left: 12px; font-size: 14px; line-height: 32px; color: #a4a8ad; }
.r-pad { padding-top: 12px; border: 0; }
.pad-grid { display: flex; margin-top: 10px; }
.pad-l { width: 132px; flex: none; }
.pad-lbl { display: flex; align-items: center; }
.pad-sp { flex: 1; }
.i-act { width: 15px; height: 15px; color: #7a8087; margin-left: 8px; }
.i-act:last-child { margin-right: -3px; }
.pad-box { height: 87px; margin-top: 4px; border: 1px solid #22272d; border-radius: 9px; display: grid; grid-template-columns: 20px 30px 20px; grid-template-rows: 22px 30px 22px; row-gap: 5.500px; justify-content: space-between; padding: 0 6px; justify-items: center; align-items: center; font-size: 11px; color: #5c6269; }
.lockb { width: 28px; height: 28px; background: #171b1f; border-radius: 8px; display: flex; align-items: center; justify-content: center; color: #a5a9ad; }
.lockb svg { width: 13px; height: 13px; }
.al-lbl { margin-top: 9px; }
.al-box { height: 60px; margin-top: 3px; border: 1px solid #22272d; border-radius: 9px; display: grid; grid-template-columns: repeat(3, 8px); justify-content: space-between; padding: 9px 10px; row-gap: 22px; align-content: start; }
.al-box i { width: 8px; height: 8px; border-radius: 2px; background: #21262c; }
.pad-r { flex: 1; padding-left: 14px; }
.exp { display: flex; gap: 14px; margin-top: 5px; }
.exp span { width: 22px; height: 22px; border-radius: 5px; border: 2px solid #4e555c; background: #0e1216; padding: 1px; display: block; }
.exp i { width: 9px; height: 100%; background: #5a6168; border-radius: 1px; }
.exp .exp-a { border-color: #a9abae; }
.exp .exp-a i { background: #a9abae; }
.exp .exp-c { background: #5a6168; box-shadow: inset 0 0 0 1px #0e1216; }
.flex-lbl { margin-top: 12px; }
.flex-in { width: 60px; height: 32px; margin-top: 3px; border: 1px solid #22272d; border-radius: 9px; }
.hz-lbl { margin: 40px 0 0 -2px; }
.hz-v { margin-left: 15px; }
.hz-ins { display: flex; gap: 12px; margin: 1px 0 0 -2px; }
.hz-ins span { width: 60px; height: 40px; border: 1px solid #22272d; border-radius: 9px; }

/* popup */
.popup { position: absolute; left: 741px; top: 230px; width: 308px; height: 480px; background: #15191d; border: 2px solid #2e3540; border-radius: 10px; display: flex; flex-direction: column; box-shadow: 0 2px 10px rgba(0,0,0,.35); }
.grip { position: absolute; left: 142px; width: 20px; height: 4px; border-radius: 2px; background: #9ba6b2; }
.grip-t { top: -3px; }
.grip-b { bottom: -3px; }
.pop-arrow { position: absolute; right: -21px; top: 58px; border-left: 20px solid #2e3540; border-top: 14px solid transparent; border-bottom: 14px solid transparent; }
.pop-head { height: 59px; background: #262d37; border-bottom: 2px solid #323a47; border-radius: 8px 8px 0 0; padding: 12px 11px 0; display: flex; flex-direction: column; flex: none; }
.pop-head span { font-size: 11.500px; font-weight: 600; color: #87919d; line-height: 16px; }
.pop-head b { font-size: 13.800px; font-weight: 600; color: #e8eaed; line-height: 20px; }
.pop-var { height: 83px; background: #262d37; border-bottom: 2px solid #323a47; padding: 15px 11px 0; flex: none; }
.pop-var-top { display: flex; align-items: center; font-size: 11.500px; color: #87919d; height: 16px; }
.pv-pen { width: 16px; height: 16px; margin-left: auto; color: #a3abb4; }
.pv-dots { margin: 0 8.500px 0 17.500px; display: flex; flex-direction: column; gap: 2px; }
.pv-dots i { width: 3px; height: 3px; border-radius: 50%; background: #a3abb4; }
.pop-var-name { display: flex; align-items: center; gap: 7px; margin-top: 4px; font-size: 13.600px; color: #eef0f2; height: 16px; }
.pop-var-name b { font-weight: 600; }
.pop-var-name svg { width: 13px; height: 13px; }
.pop-var-sub { font-size: 11.400px; font-weight: 600; color: #e07a4c; margin-top: 5px; line-height: 16px; }
.pop-body { height: 269px; overflow: hidden; padding: 15px 14px 0 13px; flex: none; }
.pf label { display: block; font-size: 11.900px; color: #68717b; line-height: 16px; }
.pf + .pf { margin-top: 14px; }
.sel { height: 34px; margin-top: 3px; border: 1px solid #2c333c; border-radius: 8px; display: flex; align-items: center; justify-content: space-between; padding: 0 17px 0 15px; font-size: 13.400px; color: #eceef0; }
.sel b { font-weight: 600; }
.sel svg { width: 14px; height: 14px; color: #8d949c; }
.pf-def { padding-top: 6px; }
.pf-def label { display: flex; align-items: center; gap: 6px; font-weight: 500; }
.pf-def label svg { width: 12px; height: 12px; }
.def-in { height: 40px; margin-top: 5px; border: 1px solid #2c333c; border-radius: 8px; padding: 10px 14px 0 0; color: #c3c7cc; }
.def-in svg { width: 11px; height: 11px; margin-left: auto; }
.pop-foot { display: flex; padding: 16px 13px 0 13px; margin-top: -1px; background: #15191d; flex: 1; position: relative; border-radius: 0 0 8px 8px; }
.pb { height: 36px; border-radius: 8px; font-size: 13px; font-weight: 600; display: flex; align-items: center; justify-content: center; }
.pb-rem { width: 76px; background: #2c1b1e; border: 1px solid #c23a3a; color: #c23a3a; }
.pb-fill { flex: 1; }
.pb-can { width: 69px; border: 1px solid #2c333c; color: #eceef0; }
.pb-con { width: 77px; margin-left: 10px; background: #4f39f0; color: #fff; }

.fab { position: absolute; left: 1292px; top: 652px; width: 48px; height: 48px; border-radius: 50%; background: #5039ee; }
```
